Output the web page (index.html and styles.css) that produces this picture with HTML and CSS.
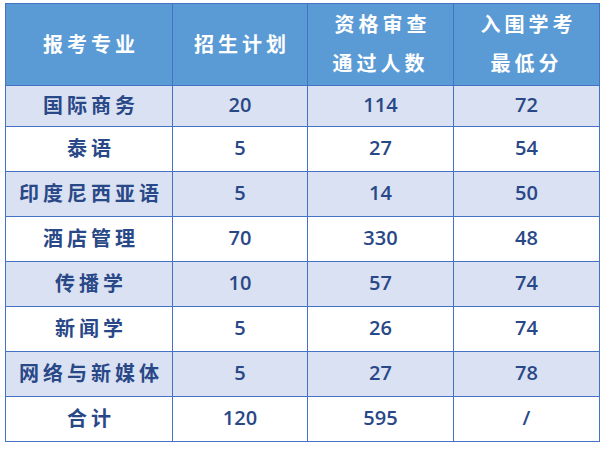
FILE: index.html
```html
<!DOCTYPE html>
<html lang="zh">
<head>
<meta charset="utf-8">
<title>招生计划</title>
<link rel="stylesheet" href="styles.css">
</head>
<body>
<table class="grid">
  <colgroup>
    <col class="c1"><col class="c2"><col class="c3"><col class="c4">
  </colgroup>
  <thead>
    <tr class="head">
      <th>报考专业</th>
      <th>招生计划</th>
      <th>资格审查<br>通过人数</th>
      <th>入围学考<br>最低分</th>
    </tr>
  </thead>
  <tbody>
    <tr class="band first"><td class="zh">国际商务</td><td class="num">20</td><td class="num">114</td><td class="num">72</td></tr>
    <tr><td class="zh">泰语</td><td class="num">5</td><td class="num">27</td><td class="num">54</td></tr>
    <tr class="band"><td class="zh">印度尼西亚语</td><td class="num">5</td><td class="num">14</td><td class="num">50</td></tr>
    <tr><td class="zh">酒店管理</td><td class="num">70</td><td class="num">330</td><td class="num">48</td></tr>
    <tr class="band"><td class="zh">传播学</td><td class="num">10</td><td class="num">57</td><td class="num">74</td></tr>
    <tr><td class="zh">新闻学</td><td class="num">5</td><td class="num">26</td><td class="num">74</td></tr>
    <tr class="band"><td class="zh">网络与新媒体</td><td class="num">5</td><td class="num">27</td><td class="num">78</td></tr>
    <tr><td class="zh">合计</td><td class="num">120</td><td class="num">595</td><td class="num">/</td></tr>
  </tbody>
</table>
</body>
</html>
```
FILE: styles.css
```css
html, body {
  margin: 0;
  padding: 0;
  background: #ffffff;
}

.grid {
  margin: 3px 0 0 5px;
  border-collapse: separate;
  border-spacing: 0;
  border-top: 1px solid #4472c4;
  border-left: 1px solid #4472c4;
  table-layout: fixed;
  width: 594px;
  font-family: "Noto Sans CJK SC", "Noto Sans", sans-serif;
  color: #294887;
}

.c1 { width: 167px; }
.c2 { width: 135px; }
.c3 { width: 146px; }
.c4 { width: 146px; }

.grid th,
.grid td {
  padding: 0 0 3px 0;
  border-right: 1px solid #4472c4;
  border-bottom: 1px solid #4472c4;
  text-align: center;
  vertical-align: middle;
  height: 41px;
}

.head th {
  height: 77px;
  background: #5b9bd5;
  color: #ffffff;
  font-weight: 700;
  font-size: 20px;
  line-height: 39px;
  letter-spacing: 4px;
  text-indent: 4px;
}

.first td {
  height: 37px;
}

.band td {
  background: #d9e1f2;
}

.zh {
  font-size: 20px;
  font-weight: 600;
  letter-spacing: 4px;
  text-indent: 4px;
}

.num {
  font-family: "Open Sans", "Noto Sans", sans-serif;
  font-size: 20px;
  font-weight: 600;
}
```
